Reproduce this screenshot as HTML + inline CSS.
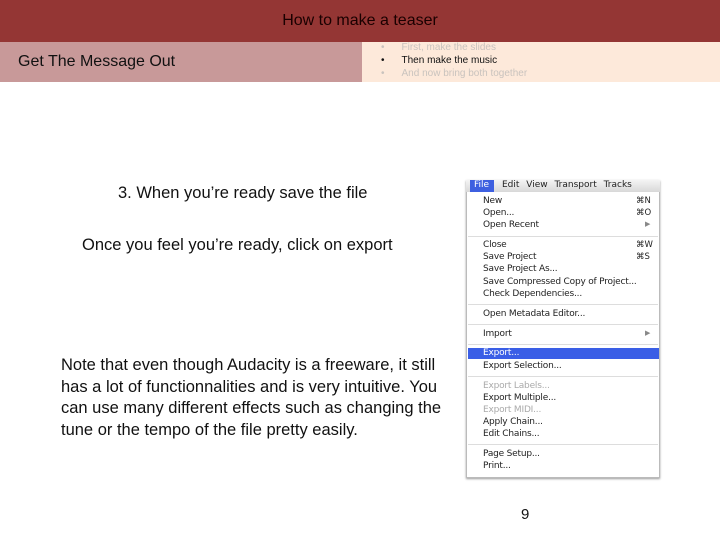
<!DOCTYPE html>
<html><head><meta charset="utf-8"><style>
*{margin:0;padding:0;box-sizing:border-box}
body{width:720px;height:540px;background:#fff;position:relative;overflow:hidden;font-family:"Liberation Sans",sans-serif}
.a{position:absolute;white-space:nowrap}
#hd{left:0;top:0;width:720px;height:42px;background:#943634}
#l{left:0;top:42px;width:362px;height:40px;background:#c89999}
#r{left:362px;top:42px;width:358px;height:40px;background:#fde9da}
.m{font-size:9px;color:#222;left:483px;font-family:"DejaVu Sans",sans-serif;letter-spacing:-0.2px}
.k{font-size:8.5px;color:#222;left:636px;font-family:"DejaVu Sans",sans-serif}
.g{color:#aaa}
.s{position:absolute;left:468px;width:190px;height:1px;background:#ddd}
</style></head><body>
<div class="a" id="hd"></div>
<div class="a" style="left:0;top:12px;width:720px;text-align:center;font-size:16px;color:#1a0000">How to make a teaser</div>
<div class="a" id="l"></div><div class="a" id="r"></div>
<div class="a" style="left:18px;top:53px;font-size:16px;color:#111">Get The Message Out</div>
<div class="a" style="left:381px;top:42px;font-size:10px;color:#c9c3be">•<span style="margin-left:17px">First, make the slides</span></div>
<div class="a" style="left:381px;top:55px;font-size:10px;color:#111">•<span style="margin-left:17px">Then make the music</span></div>
<div class="a" style="left:381px;top:68px;font-size:10px;color:#c9c3be">•<span style="margin-left:17px">And now bring both together</span></div>

<div class="a" style="left:118px;top:184px;font-size:16.5px;color:#111">3. When you’re ready save the file</div>
<div class="a" style="left:82px;top:236px;font-size:16.5px;color:#111">Once you feel you’re ready, click on export</div>
<div class="a" style="left:61px;top:355px;font-size:16.5px;line-height:21.7px;color:#111">Note that even though Audacity is a freeware, it still<br>has a lot of functionnalities and is very intuitive. You<br>can use many different effects such as changing the<br>tune or the tempo of the file pretty easily.</div>

<div class="a" style="left:466px;top:180px;width:194px;height:298px;background:#fff;border:1px solid #bbb;border-top:none;box-shadow:0 1px 2px #999"></div>
<div class="a" style="left:466px;top:180px;width:194px;height:12px;background:linear-gradient(#f4f4f4,#d8d8d8)"></div>
<div class="a" style="left:470px;top:180px;width:24px;height:12px;background:#3d5fe0"></div>
<div class="a" style="left:474px;top:180px;font-size:9px;color:#fff;font-family:'DejaVu Sans',sans-serif">File</div>
<div class="a" style="left:502px;top:180px;font-size:9px;color:#222;font-family:'DejaVu Sans',sans-serif;word-spacing:4px">Edit View Transport Tracks</div>
<div class="a" style="left:468px;top:348px;width:191px;height:11px;background:#3a5ee6"></div>
<div class="a m" style="top:196px">New</div><div class="a k" style="top:196px">⌘N</div>
<div class="a m" style="top:208px">Open...</div><div class="a k" style="top:208px">⌘O</div>
<div class="a m" style="top:220px">Open Recent</div><div class="a k" style="top:220px;left:645px;font-size:7px;color:#888">▶</div>
<div class="s" style="top:236px"></div>
<div class="a m" style="top:240px">Close</div><div class="a k" style="top:240px">⌘W</div>
<div class="a m" style="top:252px">Save Project</div><div class="a k" style="top:252px">⌘S</div>
<div class="a m" style="top:264px">Save Project As...</div>
<div class="a m" style="top:277px">Save Compressed Copy of Project...</div>
<div class="a m" style="top:289px">Check Dependencies...</div>
<div class="s" style="top:304px"></div>
<div class="a m" style="top:309px">Open Metadata Editor...</div>
<div class="s" style="top:324px"></div>
<div class="a m" style="top:329px">Import</div><div class="a k" style="top:329px;left:645px;font-size:7px;color:#888">▶</div>
<div class="s" style="top:344px"></div>
<div class="a m" style="top:348px;color:#fff">Export...</div>
<div class="a m" style="top:361px">Export Selection...</div>
<div class="s" style="top:376px"></div>
<div class="a m g" style="top:381px">Export Labels...</div>
<div class="a m" style="top:393px">Export Multiple...</div>
<div class="a m g" style="top:405px">Export MIDI...</div>
<div class="a m" style="top:417px">Apply Chain...</div>
<div class="a m" style="top:429px">Edit Chains...</div>
<div class="s" style="top:444px"></div>
<div class="a m" style="top:449px">Page Setup...</div>
<div class="a m" style="top:461px">Print...</div>

<div class="a" style="left:521px;top:506px;font-size:15px;color:#111">9</div>
</body></html>
